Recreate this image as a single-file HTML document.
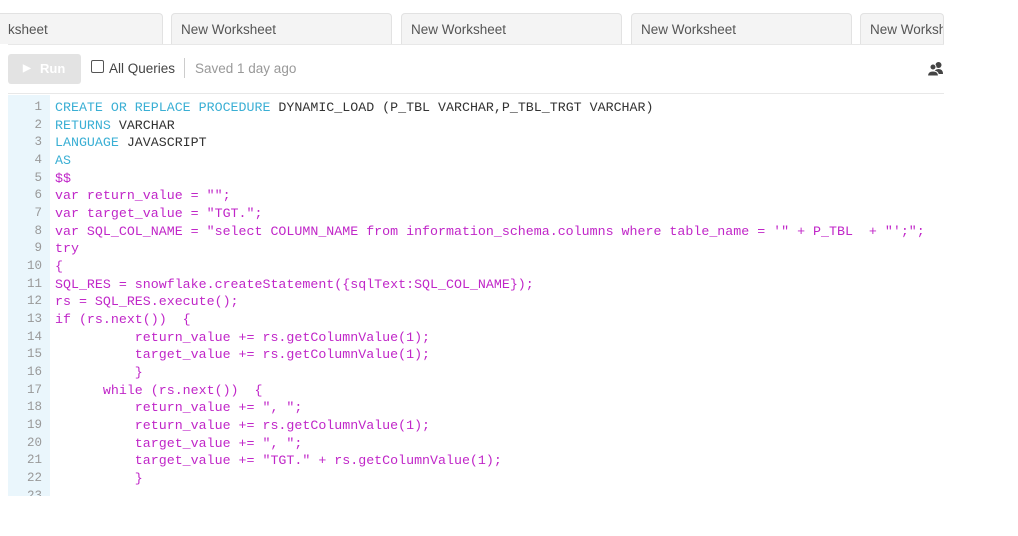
<!DOCTYPE html>
<html><head><meta charset="utf-8"><style>
body{margin:0;width:1018px;height:532px;background:#fff;position:relative;overflow:hidden;font-family:"Liberation Sans",sans-serif}
.tab{position:absolute;top:13px;height:31px;background:#f4f4f4;border:1px solid #e2e2e2;border-bottom:none;border-radius:4px 4px 0 0;box-sizing:border-box;font-size:13.5px;color:#555;line-height:31px;padding-left:9px;overflow:hidden;white-space:nowrap}
.line{position:absolute;left:8px;top:44px;width:936px;height:1px;background:#e8e8e8}
#run{position:absolute;left:8px;top:54px;width:73px;height:30px;background:#e3e3e3;border-radius:3px;color:#fff;font-size:13px;font-weight:bold;line-height:30px}
#gutter{position:absolute;left:8px;top:95px;width:42px;height:401px;background:#eaf6fc}
pre{margin:0;font-family:"Liberation Mono",monospace;font-size:13.3px;line-height:17.67px;position:absolute;top:99px}
#nums{left:8px;width:34px;text-align:right;color:#999;font-size:12.5px}
#code{left:55px;color:#c026c8}
.k{color:#3aafd4}.p{color:#333}
</style></head><body>
<div class="tab" style="left:-20px;width:183px;padding-left:27px">ksheet</div>
<div class="tab" style="left:171px;width:221px">New Worksheet</div>
<div class="tab" style="left:401px;width:221px">New Worksheet</div>
<div class="tab" style="left:631px;width:221px">New Worksheet</div>
<div class="tab" style="left:860px;width:84px">New Worksheet</div>
<div class="line"></div>
<div id="run"><span style="position:absolute;left:15px;font-size:10px">&#9654;</span><span style="position:absolute;left:32px">Run</span></div>
<div style="position:absolute;left:91px;top:60px;width:11px;height:11px;border:1px solid #555;border-radius:2px"></div>
<div style="position:absolute;left:109px;top:61px;font-size:13.5px;color:#444">All Queries</div>
<div style="position:absolute;left:184px;top:58px;width:1px;height:20px;background:#ccc"></div>
<div style="position:absolute;left:195px;top:61px;font-size:13.5px;color:#999">Saved 1 day ago</div>
<svg style="position:absolute;left:927px;top:61px" width="17" height="16" viewBox="0 0 17 16"><circle cx="11.5" cy="4" r="3" fill="#444"/><path d="M7 13 Q7 8 11.5 8 Q16 8 16 13Z" fill="#444"/><circle cx="6" cy="6" r="3" fill="#444" stroke="#fff" stroke-width="1"/><path d="M0.5 15 Q0.5 10 6 10 Q11.5 10 11.5 15Z" fill="#444" stroke="#fff" stroke-width="1"/></svg>
<div class="line" style="top:93px"></div>
<div id="gutter"></div>
<pre id="nums">1
2
3
4
5
6
7
8
9
10
11
12
13
14
15
16
17
18
19
20
21
22
23</pre>
<div style="position:absolute;left:0;top:496px;width:1018px;height:40px;background:#fff"></div>
<pre id="code" style="height:397px;overflow:hidden"><span class="k">CREATE OR REPLACE PROCEDURE</span><span class="p"> DYNAMIC_LOAD (P_TBL VARCHAR,P_TBL_TRGT VARCHAR)</span>
<span class="k">RETURNS</span><span class="p"> VARCHAR</span>
<span class="k">LANGUAGE</span><span class="p"> JAVASCRIPT</span>
<span class="k">AS</span>
$$
var return_value = "";
var target_value = "TGT.";
var SQL_COL_NAME = "select COLUMN_NAME from information_schema.columns where table_name = '" + P_TBL  + "';";
try
{
SQL_RES = snowflake.createStatement({sqlText:SQL_COL_NAME});
rs = SQL_RES.execute();
if (rs.next())  {
          return_value += rs.getColumnValue(1);
          target_value += rs.getColumnValue(1);
          }
      while (rs.next())  {
          return_value += ", ";
          return_value += rs.getColumnValue(1);
          target_value += ", ";
          target_value += "TGT." + rs.getColumnValue(1);
          }
</pre>
</body></html>
